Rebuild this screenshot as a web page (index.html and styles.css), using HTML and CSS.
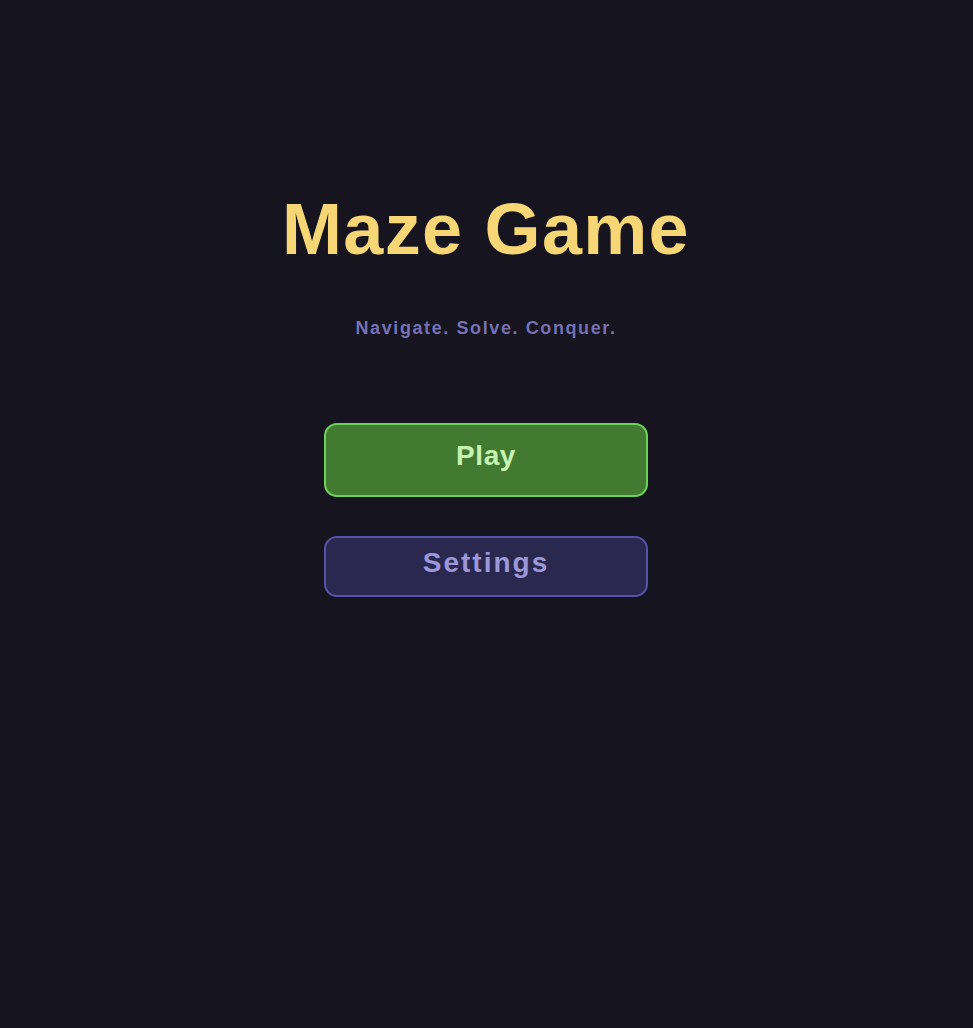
FILE: index.html
```html
<!DOCTYPE html>
<html lang="en">
<head>
<meta charset="utf-8">
<title>Maze Game</title>
<link rel="stylesheet" href="styles.css">
</head>
<body>
<main class="menu">
  <h1 class="title">Maze Game</h1>
  <p class="subtitle">Navigate. Solve. Conquer.</p>
  <div class="actions">
    <button class="btn btn-play">Play</button>
    <button class="btn btn-settings">Settings</button>
  </div>
</main>
</body>
</html>
```
FILE: styles.css
```css
html, body {
  margin: 0;
  padding: 0;
  height: 100%;
  background: #15141f;
}
body {
  font-family: "Liberation Sans", Arial, sans-serif;
  font-weight: bold;
}
.menu {
  display: flex;
  flex-direction: column;
  align-items: center;
  padding-top: 193px;
  padding-right: 1px;
}
.title {
  margin: 0;
  font-size: 72px;
  line-height: 1;
  letter-spacing: 1.3px;
  color: #f7d675;
}
.subtitle {
  margin: 54px 0 0;
  font-size: 18px;
  line-height: 1;
  letter-spacing: 1.6px;
  color: #7571b3;
}
.actions {
  margin-top: 86px;
  display: flex;
  flex-direction: column;
  gap: 39px;
}
.btn {
  box-sizing: border-box;
  width: 324px;
  border-radius: 13px;
  border: 2px solid;
  font-family: "Liberation Sans", Arial, sans-serif;
  font-weight: bold;
  font-size: 28px;
  line-height: 32px;
  margin: 0;
  text-align: center;
}
.btn-play {
  height: 74px;
  padding: 15px 0 23px;
  letter-spacing: 0.6px;
  background: #437a32;
  border-color: #6dd25a;
  color: #c6f3b1;
}
.btn-settings {
  height: 61px;
  padding: 9px 0 16px;
  letter-spacing: 2px;
  background: #2a284f;
  border-color: #5651a9;
  color: #9c97d9;
}
```
